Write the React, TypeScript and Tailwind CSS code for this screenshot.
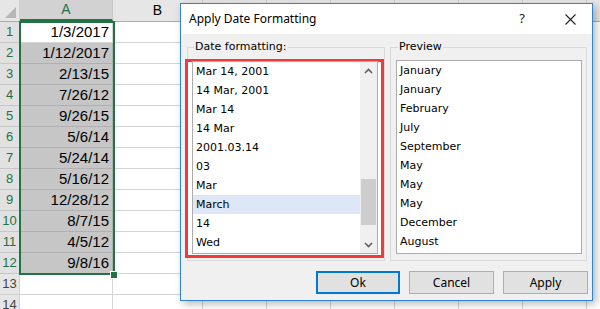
import React from "react";

const COLS = [
  { name: "A", w: "w-[93px]" },
  { name: "B", w: "w-[90px]" },
  { name: "C", w: "w-[64px]" },
  { name: "D", w: "w-[64px]" },
  { name: "E", w: "w-[64px]" },
  { name: "F", w: "w-[64px]" },
  { name: "G", w: "w-[64px]" },
  { name: "H", w: "w-[64px]" },
];

const DATES = [
  "1/3/2017",
  "1/12/2017",
  "2/13/15",
  "7/26/12",
  "9/26/15",
  "5/6/14",
  "5/24/14",
  "5/16/12",
  "12/28/12",
  "8/7/15",
  "4/5/12",
  "9/8/16",
];

const FORMATS = [
  "Mar 14, 2001",
  "14 Mar, 2001",
  "Mar 14",
  "14 Mar",
  "2001.03.14",
  "03",
  "Mar",
  "March",
  "14",
  "Wed",
];

const PREVIEW = [
  "January",
  "January",
  "February",
  "July",
  "September",
  "May",
  "May",
  "May",
  "December",
  "August",
];

function Chevron({ up }: { up?: boolean }) {
  return (
    <svg width="9" height="6" viewBox="0 0 9 6">
      <polyline
        points={up ? "1,5 4.5,1.5 8,5" : "1,1 4.5,4.5 8,1"}
        fill="none"
        stroke="#606060"
        strokeWidth="1.6"
      />
    </svg>
  );
}

function Sheet() {
  const rows = Array.from({ length: 14 }, (_, i) => i + 1);
  return (
    <div className="relative font-['Liberation_Sans',Arial,sans-serif] text-black">
      {/* column headers */}
      <div className="flex h-[22px] border-b border-[#ababab] bg-[#e6e6e6]">
        <div className="relative w-[20px] border-r border-[#d0d0d0]">
          <svg className="absolute right-[3px] bottom-[3px]" width="11" height="11" viewBox="0 0 11 11">
            <polygon points="11,0 11,11 0,11" fill="#b7b7b7" />
          </svg>
        </div>
        {COLS.map((c, i) => (
          <div
            key={c.name}
            className={
              i === 0
                ? `${c.w} shrink-0 flex items-center justify-center border-r border-[#c6c6c6] border-b-2 border-b-[#217346] bg-[#d2d2d2] text-[14px] text-[#217346]`
                : `${c.w} shrink-0 flex items-center justify-center border-r border-[#d0d0d0] text-[14px]`
            }
          >
            {c.name}
          </div>
        ))}
      </div>

      {rows.map((r) => {
        const sel = r <= 12;
        return (
          <div key={r} className="flex h-[21px]">
            <div
              className={
                sel
                  ? "w-[20px] shrink-0 flex items-center justify-center border-r border-b border-[#c6c6c6] bg-[#e1e1e1] text-[13px] text-[#217346]"
                  : "w-[20px] shrink-0 flex items-center justify-center border-r border-b border-[#d0d0d0] bg-[#e6e6e6] text-[13px] text-[#444]"
              }
            >
              {r}
            </div>
            {COLS.map((c, i) => {
              if (i === 0 && sel) {
                return (
                  <div
                    key={c.name}
                    className={
                      r === 1
                        ? `${c.w} shrink-0 flex items-center justify-end pr-[3px] border-r border-b border-[#d4d4d4] bg-white text-[15px]`
                        : `${c.w} shrink-0 flex items-center justify-end pr-[3px] border-r border-b border-[#b0b0b0] bg-[#c6c6c6] text-[15px]`
                    }
                  >
                    {DATES[r - 1]}
                  </div>
                );
              }
              return (
                <div
                  key={c.name}
                  className={`${c.w} shrink-0 border-r border-b border-[#d4d4d4] bg-white`}
                />
              );
            })}
          </div>
        );
      })}

      {/* selection outline and fill handle */}
      <div className="absolute left-[19px] top-[21px] w-[96px] h-[254px] border-2 border-[#217346] pointer-events-none" />
      <div className="absolute left-[111px] top-[272px] w-[6px] h-[6px] bg-[#217346] outline outline-1 outline-white" />
    </div>
  );
}

function Dialog() {
  return (
    <div className="absolute left-[180px] top-[3px] w-[413px] h-[298px] border border-[#2d83d6] bg-[#f0f0f0] shadow-[3px_3px_8px_rgba(0,0,0,0.28)] font-['DejaVu_Sans',Tahoma,sans-serif] text-[11px] text-black flex flex-col">
      {/* title bar */}
      <div className="h-[30px] bg-white flex items-center pl-[8px] shrink-0">
        <span className="font-['Noto_Sans',sans-serif] text-[12px] text-black">Apply Date Formatting</span>
        <span className="ml-auto font-['Noto_Sans',sans-serif] text-[13px] text-[#222] mr-[40px]">?</span>
        <svg className="mr-[16px]" width="11" height="11" viewBox="0 0 11 11">
          <line x1="0.5" y1="0.5" x2="10.5" y2="10.5" stroke="#222" strokeWidth="1.1" />
          <line x1="10.5" y1="0.5" x2="0.5" y2="10.5" stroke="#222" strokeWidth="1.1" />
        </svg>
      </div>

      <div className="flex-1 pl-[6px] pr-[4px] pt-[13px]">
        <div className="flex gap-[5px]">
          {/* left group */}
          <div className="relative w-[198px] h-[214px] border border-[#d9d9d9]">
            <span className="absolute left-[6px] -top-[8px] bg-[#f0f0f0] px-[1px] leading-[14px]">
              Date formatting:
            </span>
            <div className="-ml-[3px] mt-[11px] w-[199px] h-[199px] border-[3px] border-[#f23a3a] bg-white">
              <div className="ml-[4px] -mt-[1px] w-[186px] h-[193px] border border-[#acacac] bg-white flex">
                <div className="flex-1 flex flex-col">
                  {FORMATS.map((f) => (
                    <div
                      key={f}
                      className={
                        f === "March"
                          ? "h-[19px] leading-[19px] pl-[3px] bg-[#dde7f8]"
                          : "h-[19px] leading-[19px] pl-[3px]"
                      }
                    >
                      {f}
                    </div>
                  ))}
                </div>
                <div className="w-[17px] bg-[#f0f0f0] flex flex-col items-center">
                  <div className="h-[17px] flex items-center justify-center">
                    <Chevron up />
                  </div>
                  <div className="flex-1 w-full px-[1px] pt-[100px]">
                    <div className="h-[46px] bg-[#cdcdcd]" />
                  </div>
                  <div className="h-[17px] flex items-center justify-center">
                    <Chevron />
                  </div>
                </div>
              </div>
            </div>
          </div>

          {/* right group */}
          <div className="relative w-[197px] h-[214px] border border-[#d9d9d9] pl-[5px] pt-[12px]">
            <span className="absolute left-[7px] -top-[8px] bg-[#f0f0f0] px-[1px] leading-[14px]">
              Preview
            </span>
            <div className="w-[186px] h-[194px] border border-[#acacac] bg-white">
              {PREVIEW.map((p, i) => (
                <div key={i} className="h-[19px] leading-[19px] pl-[3px]">
                  {p}
                </div>
              ))}
            </div>
          </div>
        </div>

        {/* buttons */}
        <div className="mt-[10px] flex justify-end gap-[9px] font-['Noto_Sans',sans-serif] text-[12px]">
          <button className="w-[84px] h-[23px] border-2 border-[#0078d7] bg-[#e1e1e1]">Ok</button>
          <button className="w-[85px] h-[23px] border border-[#adadad] bg-[#e1e1e1]">Cancel</button>
          <button className="w-[85px] h-[23px] border border-[#adadad] bg-[#e1e1e1]">Apply</button>
        </div>
      </div>
    </div>
  );
}

export default function App() {
  return (
    <div className="relative w-[600px] h-[309px] overflow-hidden bg-white">
      <Sheet />
      <Dialog />
    </div>
  );
}
